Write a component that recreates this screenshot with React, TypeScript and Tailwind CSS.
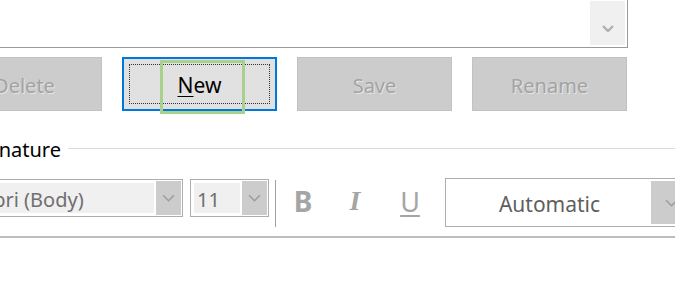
import React from 'react';

function Chevron({ className, strokeWidth = 1.2 }: { className?: string; strokeWidth?: number }) {
    return (
        <svg viewBox="0 0 12 7" className={className} fill="none">
            <path d="M1 1 L6 6 L11 1" stroke="currentColor" strokeWidth={strokeWidth} />
        </svg>
    );
}

function DisabledButton({ label }: { label: string }) {
    return (
        <div className="w-[155px] h-[54px] shrink-0 bg-[#cccccc] border border-[#c2c2c2] flex items-center justify-center pt-[4px] text-[20px] text-[#a3a3a3] [text-shadow:1px_1px_0_#e6e6e6]">
            {label}
        </div>
    );
}

export default function App() {
    return (
        <div className="w-[675px] h-[301px] bg-white overflow-hidden relative font-['Noto_Sans',sans-serif] leading-none">
            {/* list box, only its lower edge is in view */}
            <div className="-ml-[30px] -mt-[2px] w-[658px] h-[50px] border border-[#9a9a9a] bg-white p-[2px] flex justify-end">
                <div className="w-[35px] h-full bg-[#f0f0f0] flex justify-center pt-[24px] text-[#b0b0b0]">
                    <Chevron className="w-[12px] h-[7px]" strokeWidth={2.4} />
                </div>
            </div>

            {/* button row */}
            <div className="mt-[9px] -ml-[53px] flex gap-[20px]">
                <DisabledButton label="Delete" />
                <div className="w-[155px] h-[54px] shrink-0 border-2 border-[#0078d7] bg-[#e1e1e1] p-[5px]">
                    <div className="w-full h-full border border-dotted border-[#333333] flex items-center justify-center pt-[3px] text-[21px] text-black">
                        <span><span className="underline underline-offset-[3px] decoration-1">N</span>ew</span>
                    </div>
                </div>
                <DisabledButton label="Save" />
                <DisabledButton label="Rename" />
            </div>

            {/* signature heading */}
            <div className="mt-[26px] h-[26px] flex items-center">
                <div className="w-[61px] shrink-0 flex justify-end">
                    <span className="whitespace-nowrap text-[20px] text-black">Signature</span>
                </div>
                <div className="ml-[7px] flex-1 h-px bg-[#dcdcdc] -mt-[4px]" />
            </div>

            {/* formatting toolbar */}
            <div className="mt-[15px] -ml-[60px] flex items-start">
                <div className="mt-[1px] w-[243px] h-[38px] shrink-0 border border-[#adadad] bg-white p-[1px] flex">
                    <div className="flex-1 m-[2px] bg-[#f0f0f0] flex items-center pl-[15px] pt-[3px] overflow-hidden">
                        <span className="whitespace-nowrap text-[20px] text-[#6f6f6f]">Calibri (Body)</span>
                    </div>
                    <div className="w-[25px] bg-[#cccccc] flex items-center justify-center text-[#9a9a9a]">
                        <Chevron className="w-[13px] h-[8px]" />
                    </div>
                </div>
                <div className="mt-[1px] ml-[7px] w-[79px] h-[38px] shrink-0 border border-[#adadad] bg-white p-[1px] flex">
                    <div className="flex-1 m-[2px] bg-[#f0f0f0] flex items-center pl-[3px] pt-[3px]">
                        <span className="text-[20px] text-[#6f6f6f]">11</span>
                    </div>
                    <div className="w-[25px] bg-[#cccccc] flex items-center justify-center text-[#9a9a9a]">
                        <Chevron className="w-[13px] h-[8px]" />
                    </div>
                </div>
                <div className="ml-[6px] mt-[2px] w-px h-[47px] shrink-0 bg-[#a0a0a0]" />
                <div className="ml-[9px] w-[36px] h-[46px] shrink-0 flex items-center justify-center text-[28px] font-bold text-[#a5a5a5]">B</div>
                <div className="ml-[16px] w-[36px] h-[46px] shrink-0 flex items-center justify-center text-[28px] italic font-['Liberation_Serif',serif] font-bold text-[#a5a5a5]">I</div>
                <div className="ml-[19px] w-[36px] h-[46px] shrink-0 flex items-center justify-center text-[27px] text-[#a5a5a5]">
                    <span className="underline underline-offset-[3px] decoration-2">U</span>
                </div>
                <div className="ml-[17px] w-[260px] h-[49px] shrink-0 border border-[#adadad] bg-white p-[2px] flex">
                    <div className="w-[203px] shrink-0 flex items-center justify-center pt-[4px] text-[21px] text-[#5f5f5f]">Automatic</div>
                    <div className="w-[40px] shrink-0 bg-[#cccccc] flex items-center justify-center text-[#9a9a9a]">
                        <Chevron className="w-[13px] h-[8px]" />
                    </div>
                </div>
            </div>

            <div className="mt-[9px] h-[2px] bg-[#bdbdbd]" />

            {/* annotation highlight */}
            <div className="absolute left-[160px] top-[60px] w-[85px] h-[54px] border-[3px] border-[#a9d18e]" />
        </div>
    );
}
